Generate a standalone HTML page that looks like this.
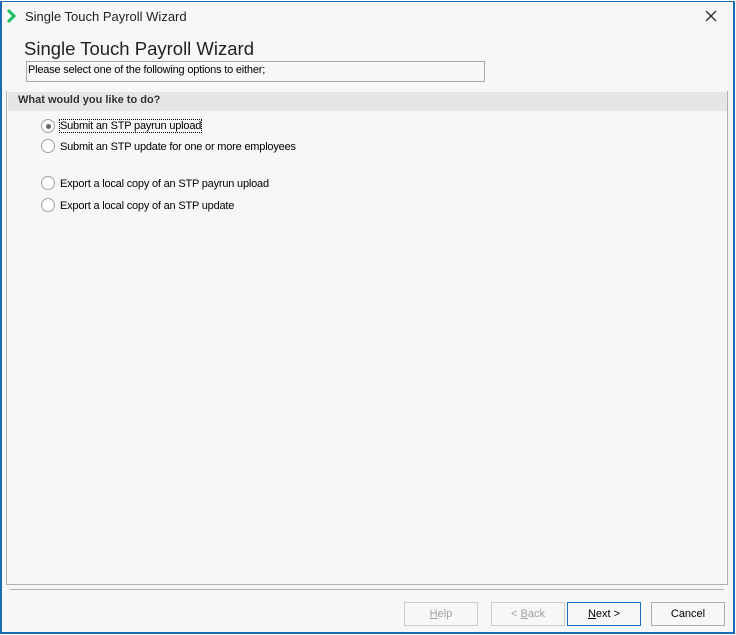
<!DOCTYPE html>
<html><head><style>
body{margin:0;width:736px;height:635px;background:#fff;position:relative;overflow:hidden;font-family:"Liberation Sans",sans-serif;font-size:11px;color:#000}
.win{position:absolute;left:0;top:1px;width:731px;height:630px;border:2px solid #1c6bb5;border-width:1px 2px 2px 2px;background:#f7f7f7}
.a{position:absolute}
.radio{position:absolute;left:41px;width:14px;height:14px;border:1px solid #a0a0a0;border-radius:50%;background:#fff;box-sizing:border-box}
.lbl{position:absolute;left:60px;font-size:11px;letter-spacing:-0.2px}
.btn{position:absolute;top:602px;width:74px;height:24px;border:1px solid #adadad;box-sizing:border-box;text-align:center;line-height:23px;font-size:11px;background:#f7f7f7}
</style></head><body>
<div class="win"></div>
<svg class="a" style="left:7px;top:9px" width="12" height="14" viewBox="0 0 12 14"><path d="M1 1 L7 7 L1 13" stroke="#1fbf6a" stroke-width="3" fill="none"/></svg>
<div class="a" style="left:25px;top:9px;font-size:13px;color:#222">Single Touch Payroll Wizard</div>
<svg class="a" style="left:705px;top:10px" width="12" height="12"><path d="M1 1L11 11M11 1L1 11" stroke="#333" stroke-width="1.4"/></svg>
<div class="a" style="left:24px;top:38px;font-size:18.5px;color:#222">Single Touch Payroll Wizard</div>
<div class="a" style="left:26px;top:61px;width:459px;height:21px;border:1px solid #a8a8a8;box-sizing:border-box;font-size:11px;line-height:17px;padding-left:1px;letter-spacing:-0.2px">Please select one of the following options to either;</div>
<div class="a" style="left:6px;top:91px;width:722px;height:494px;border:1px solid #b0b0b0;border-top:none;box-sizing:border-box"></div>
<div class="a" style="left:8px;top:92px;width:719px;height:19px;background:#e6e6e6"></div>
<div class="a" style="left:18px;top:94px;font-weight:bold;font-size:11px;color:#333">What would you like to do?</div>
<div class="radio" style="top:119px"><div class="a" style="left:4px;top:4px;width:5px;height:5px;border-radius:50%;background:#666"></div></div>
<div class="lbl" style="top:120px;outline:1px dotted #000">Submit an STP payrun upload</div>
<div class="radio" style="top:139px"></div>
<div class="lbl" style="top:141px">Submit an STP update for one or more employees</div>
<div class="radio" style="top:176px"></div>
<div class="lbl" style="top:178px">Export a local copy of an STP payrun upload</div>
<div class="radio" style="top:198px"></div>
<div class="lbl" style="top:200px">Export a local copy of an STP update</div>
<div class="a" style="left:10px;top:589px;width:714px;height:1px;background:#b0b0b0"></div>
<div class="btn" style="left:404px;border-color:#ccc;color:#a0a0a0"><u>H</u>elp</div>
<div class="btn" style="left:491px;border-color:#ccc;color:#a0a0a0">&lt; <u>B</u>ack</div>
<div class="btn" style="left:567px;border-color:#1a6fc0"><u>N</u>ext &gt;</div>
<div class="btn" style="left:651px">Cancel</div>
</body></html>
